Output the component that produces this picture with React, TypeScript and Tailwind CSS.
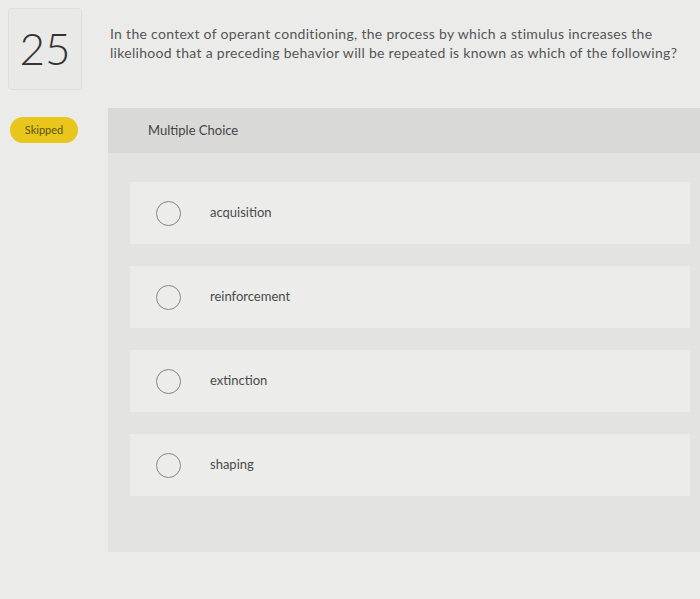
import React from 'react';

const options = ['acquisition', 'reinforcement', 'extinction', 'shaping'];

const App = () => {
  return (
    <div className="w-[700px] h-[599px] overflow-hidden bg-[#ebebea] font-['Lato','Liberation_Sans',sans-serif] text-[#4a4a4a]">
      {/* question header */}
      <div className="flex pt-2 pl-2">
        <div className="w-[74px] h-[82px] rounded-[4px] border border-[#dededd] bg-[#e9e9e8] flex items-center justify-center">
          <span className="text-[44px] font-light text-[#333] leading-none -mt-[3px]">25</span>
        </div>
        <p className="ml-[28px] mt-[16px] text-[14px] leading-[19px] tracking-[0.3px] text-[#555]">
          In the context of operant conditioning, the process by which a stimulus increases the
          <br />
          likelihood that a preceding behavior will be repeated is known as which of the following?
        </p>
      </div>

      <div className="flex mt-[18px]">
        {/* status */}
        <div className="w-[108px] shrink-0">
          <div className="ml-[10px] mt-[9px] w-[68px] h-[26px] rounded-full bg-[#e8c61c] flex items-center justify-center text-[11px] text-[#5e5212]">
            Skipped
          </div>
        </div>

        {/* answer panel */}
        <div className="flex-1 h-[444px] bg-[#e3e3e2]">
          <div className="h-[45px] bg-[#d9d9d8] flex items-center pl-[40px] text-[13px] text-[#444]">
            Multiple Choice
          </div>
          <div className="flex flex-col gap-[22px] pt-[29px] pl-[22px] pr-[10px]">
            {options.map((opt) => (
              <div key={opt} className="h-[62px] bg-[#ececeb] flex items-center pl-[26px]">
                <span className="w-[25px] h-[25px] rounded-full border-[1.5px] border-[#85858e] shrink-0" />
                <span className="ml-[29px] text-[13px] text-[#4a4a4a]">{opt}</span>
              </div>
            ))}
          </div>
        </div>
      </div>
    </div>
  );
};

export default App;
